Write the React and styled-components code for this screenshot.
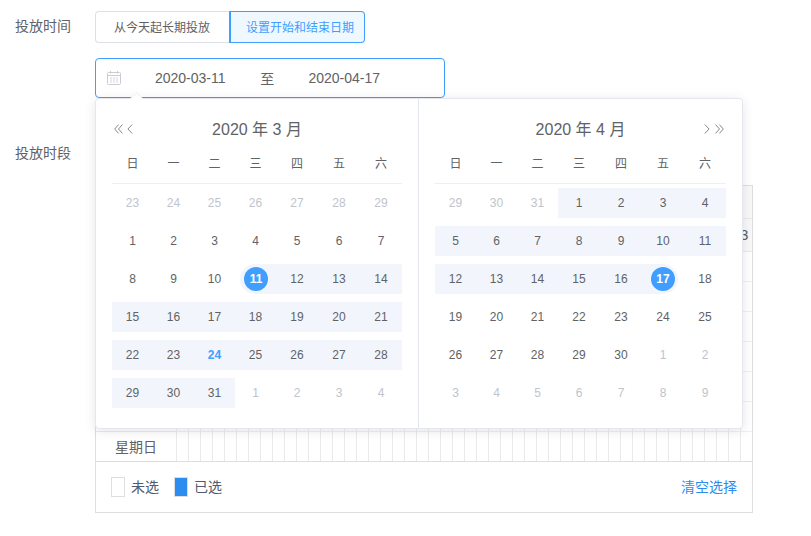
import React from "react";
import styled, { createGlobalStyle } from "styled-components";

const Global = createGlobalStyle`
  html, body { margin: 0; padding: 0; background: #fff; }
  body { font-family: "Liberation Sans", "Noto Sans CJK SC", sans-serif; color: #606266; overflow: hidden; }
  * { box-sizing: border-box; }
`;

const Page = styled.div`
  width: 811px;
  height: 536px;
  padding-top: 11px;
`;
const FormRow = styled.div`
  display: flex;
  align-items: flex-start;
  margin-top: ${(p) => p.$top || 0}px;
`;
const Label = styled.div`
  width: 95px;
  padding-left: 15px;
  flex: none;
  font-size: 14px;
  line-height: ${(p) => p.$lh || 30}px;
  color: #606266;
`;
const Toggle = styled.div`
  display: flex;
`;
const ToggleButton = styled.div`
  height: 32px;
  font-size: 12px;
  line-height: 32px;
  white-space: nowrap;
  border: 1px solid ${(p) => (p.$active ? "#409eff" : "#dcdfe6")};
  color: ${(p) => (p.$active ? "#409eff" : "#606266")};
  background: ${(p) => (p.$active ? "#f0f8ff" : "#fff")};
  padding: ${(p) => (p.$active ? "0 10px 0 15px" : "0 19px 0 18px")};
  border-radius: ${(p) => (p.$active ? "0 4px 4px 0" : "4px 0 0 4px")};
  border-left-width: ${(p) => (p.$active ? 2 : 1)}px;
  border-right-width: ${(p) => (p.$active ? 1 : 0)}px;
`;
const PickerWrap = styled.div`
  position: relative;
  width: 350px;
`;
const DateInput = styled.div`
  display: flex;
  align-items: center;
  width: 350px;
  height: 40px;
  border: 1px solid #409eff;
  border-radius: 4px;
  font-size: 14px;
  padding-left: 11px;
  color: #606266;
`;
const IconSlot = styled.div`
  width: 14px;
  height: 14px;
  margin-right: 1px;
  flex: none;
  display: flex;
`;
const DateValue = styled.div`
  width: 136.5px;
  text-align: center;
  flex: none;
`;
const Separator = styled.div`
  width: 17.5px;
  text-align: center;
  flex: none;
`;
const Popup = styled.div`
  position: absolute;
  z-index: 5;
  top: 40px;
  left: 0;
  width: 648px;
  height: 331px;
  display: flex;
  background: #fff;
  border: 1px solid #e4e7ed;
  border-radius: 4px;
  box-shadow: 0 2px 12px 0 rgba(0, 0, 0, 0.1);
`;
const Arrow = styled.div`
  position: absolute;
  top: -5px;
  left: 36px;
  width: 9px;
  height: 9px;
  background: #fff;
  border-top: 1px solid #eef0f4;
  border-left: 1px solid #eef0f4;
  transform: rotate(45deg);
`;
const Pane = styled.div`
  padding: 16px 16px 0;
  border-left: ${(p) => (p.$right ? "1px solid #e4e7ed" : "none")};
  width: ${(p) => (p.$right ? 324 : 322)}px;
  flex: none;
`;
const PaneHeader = styled.div`
  position: relative;
  height: 28px;
  line-height: 30px;
  text-align: center;
  font-size: 16px;
  color: #606266;
`;
const Nav = styled.div`
  position: absolute;
  top: 0;
  ${(p) => (p.$right ? "right: 2px;" : "left: 2px;")}
  height: 28px;
  display: flex;
  align-items: center;
  gap: ${(p) => (p.$right ? 5 : 4)}px;
`;
const WeekRow = styled.div`
  display: grid;
  grid-template-columns: ${(p) => (p.$right ? "repeat(3, 41px) repeat(4, 1fr)" : "repeat(4, 41px) repeat(3, 1fr)")};
  height: 41px;
  line-height: 42px;
  font-size: 12px;
  text-align: center;
  border-bottom: 1px solid #ebeef5;
  color: #606266;
`;
const DayGrid = styled.div`
  display: grid;
  grid-template-columns: ${(p) => (p.$right ? "repeat(3, 41px) repeat(4, 1fr)" : "repeat(4, 41px) repeat(3, 1fr)")};
  grid-auto-rows: 30px;
  row-gap: 8px;
  margin-top: 4px;
`;
const DayCell = styled.div`
  display: flex;
  align-items: center;
  justify-content: center;
  font-size: 12px;
  color: ${(p) => (p.$muted ? "#c0c4cc" : p.$today ? "#409eff" : "#606266")};
  font-weight: ${(p) => (p.$today ? 700 : 400)};
  background: ${(p) => (p.$range ? "#f2f6fc" : "transparent")};
  margin-left: ${(p) => (p.$start ? 5 : 0)}px;
  margin-right: ${(p) => (p.$end ? 6 : 0)}px;
  border-radius: ${(p) => (p.$start ? "15px 0 0 15px" : p.$end ? "0 15px 15px 0" : "0")};
  padding-right: ${(p) => (p.$start ? 4 : 0)}px;
  padding-left: ${(p) => (p.$end ? 6 : 0)}px;
`;
const Selected = styled.span`
  display: block;
  width: 24px;
  height: 24px;
  line-height: 24px;
  border-radius: 50%;
  text-align: center;
  color: #fff;
  font-weight: 700;
  background: #409eff;
`;
const Schedule = styled.div`
  padding-top: 42px;
`;
const Table = styled.div`
  width: 658px;
  border: 1px solid #dcdee2;
`;
const TableGrid = styled.div`
  display: grid;
  grid-template-columns: 80px repeat(48, 12px);
  grid-template-rows: 33px 33px repeat(7, 30px);
`;
const Corner = styled.div`
  grid-row: span 2;
  background: #f8f8f9;
  border-bottom: 1px solid #e8eaec;
`;
const HeadCell = styled.div`
  grid-column: span ${(p) => p.$span};
  background: #f8f8f9;
  border-bottom: 1px solid #e8eaec;
  border-left: 1px solid #e8eaec;
  font-size: 14px;
  display: flex;
  align-items: center;
  justify-content: center;
  color: #515a6e;
`;
const DayName = styled.div`
  border-bottom: 1px solid #e8eaec;
  font-size: 14px;
  padding: 0 0 1px 19px;
  display: flex;
  align-items: center;
  color: #606266;
`;
const SlotCell = styled.div`
  border-bottom: 1px solid #f0f0f2;
  border-left: 1px solid #e8eaec;
`;
const Footer = styled.div`
  height: 51px;
  margin-top: -1px;
  position: relative;
  border-top: 1px solid #dcdee2;
  display: flex;
  align-items: center;
  padding: 0 15px 1px;
  font-size: 14px;
  color: #515a6e;
`;
const Swatch = styled.span`
  width: 14px;
  height: 20px;
  margin-right: 6px;
  border: 1px solid #dcdee2;
  background: ${(p) => (p.$on ? "#2d8cf0" : "#fff")};
`;
const LegendText = styled.span`
  margin-right: 15px;
  line-height: 20px;
`;
const ClearLink = styled.span`
  margin-left: auto;
  color: #2d8cf0;
  line-height: 20px;
`;

const Chevron = ({ dir, double }) => {
  const d = dir === "left";
  const w = double ? 9 : 6;
  const single = d ? "M5.2 0.5 L0.9 5 L5.2 9.5" : "M0.8 0.5 L5.1 5 L0.8 9.5";
  return (
    <svg width={w} height="10" viewBox={`0 0 ${w} 10`} fill="none" stroke="#75787e" strokeWidth="0.9">
      {double ? (
        d ? (
          <>
            <path d="M4.6 0.6 L0.7 5 L4.6 9.4" />
            <path d="M8.4 0.6 L4.5 5 L8.4 9.4" />
          </>
        ) : (
          <>
            <path d="M0.6 0.6 L4.5 5 L0.6 9.4" />
            <path d="M4.4 0.6 L8.3 5 L4.4 9.4" />
          </>
        )
      ) : (
        <path d={single} />
      )}
    </svg>
  );
};

const CalendarIcon = () => (
  <svg width="14" height="14" viewBox="0 0 14 14" fill="none" stroke="#c9ccd3" strokeWidth="1">
    <rect x="0.5" y="1.5" width="13" height="12" rx="1" />
    <path d="M0.5 4.5 H13.5 M3.5 0 V2.5 M10.5 0 V2.5" />
    <path d="M3 7 H5 M6 7 H8 M9 7 H11 M3 9 H5 M6 9 H8 M9 9 H11 M3 11 H5 M6 11 H8 M9 11 H11" strokeWidth="0.8" />
  </svg>
);

const WEEK = ["日", "一", "二", "三", "四", "五", "六"];

const march = [
  [23, 1], [24, 1], [25, 1], [26, 1], [27, 1], [28, 1], [29, 1],
  ...[1, 2, 3, 4, 5, 6, 7, 8, 9, 10].map((n) => [n]),
  [11, 0, "start"],
  ...[12, 13, 14, 15, 16, 17, 18, 19, 20, 21, 22, 23].map((n) => [n, 0, "range"]),
  [24, 0, "today"],
  ...[25, 26, 27, 28, 29, 30, 31].map((n) => [n, 0, "range"]),
  [1, 1], [2, 1], [3, 1], [4, 1],
];
const april = [
  [29, 1], [30, 1], [31, 1],
  ...[1, 2, 3, 4, 5, 6, 7, 8, 9, 10, 11, 12, 13, 14, 15, 16].map((n) => [n, 0, "range"]),
  [17, 0, "end"],
  ...[18, 19, 20, 21, 22, 23, 24, 25, 26, 27, 28, 29, 30].map((n) => [n]),
  [1, 1], [2, 1], [3, 1], [4, 1], [5, 1], [6, 1], [7, 1], [8, 1], [9, 1],
];

const Month = ({ title, days, right }) => (
  <Pane $right={right}>
    <PaneHeader>
      <Nav $right={right}>
        {right ? (
          <>
            <Chevron dir="right" />
            <Chevron dir="right" double />
          </>
        ) : (
          <>
            <Chevron dir="left" double />
            <Chevron dir="left" />
          </>
        )}
      </Nav>
      {title}
    </PaneHeader>
    <WeekRow $right={right}>
      {WEEK.map((w) => (
        <div key={w}>{w}</div>
      ))}
    </WeekRow>
    <DayGrid $right={right}>
      {days.map(([n, muted, kind], i) => {
        const start = kind === "start";
        const end = kind === "end";
        return (
          <DayCell
            key={i}
            $muted={!!muted}
            $range={!!kind}
            $start={start}
            $end={end}
            $today={kind === "today"}
          >
            {start || end ? <Selected>{n}</Selected> : n}
          </DayCell>
        );
      })}
    </DayGrid>
  </Pane>
);

/* Only the labels the open picker leaves visible carry text. */
const ROWS = ["", "", "", "", "", "", "星期日"];
const HOURS = Array.from({ length: 24 }, (_, h) => (h === 23 ? "23" : ""));

export default function App() {
  return (
    <Page>
      <Global />
      <FormRow>
        <Label $lh={30}>投放时间</Label>
        <Toggle>
          <ToggleButton>从今天起长期投放</ToggleButton>
          <ToggleButton $active>设置开始和结束日期</ToggleButton>
        </Toggle>
      </FormRow>
      <FormRow $top={15}>
        <Label />
        <PickerWrap>
          <DateInput>
            <IconSlot>
              <CalendarIcon />
            </IconSlot>
            <DateValue>2020-03-11</DateValue>
            <Separator>至</Separator>
            <DateValue>2020-04-17</DateValue>
          </DateInput>
          <Popup>
            <Arrow />
            <Month title="2020 年 3 月" days={march} />
            <Month title="2020 年 4 月" days={april} right />
          </Popup>
        </PickerWrap>
      </FormRow>
      <FormRow $top={45}>
        <Label $lh={20}>投放时段</Label>
      </FormRow>
      <FormRow $top={-20}>
        <Label />
        <Schedule>
          <Table>
            <TableGrid>
              <Corner />
              <HeadCell $span={24} />
              <HeadCell $span={24} />
              {HOURS.map((h, i) => (
                <HeadCell key={i} $span={2}>
                  {h}
                </HeadCell>
              ))}
              {ROWS.map((d, r) => (
                <React.Fragment key={r}>
                  <DayName>{d}</DayName>
                  {Array.from({ length: 48 }, (_, i) => (
                    <SlotCell key={i} />
                  ))}
                </React.Fragment>
              ))}
            </TableGrid>
            <Footer>
              <Swatch />
              <LegendText>未选</LegendText>
              <Swatch $on />
              <LegendText>已选</LegendText>
              <ClearLink>清空选择</ClearLink>
            </Footer>
          </Table>
        </Schedule>
      </FormRow>
    </Page>
  );
}
